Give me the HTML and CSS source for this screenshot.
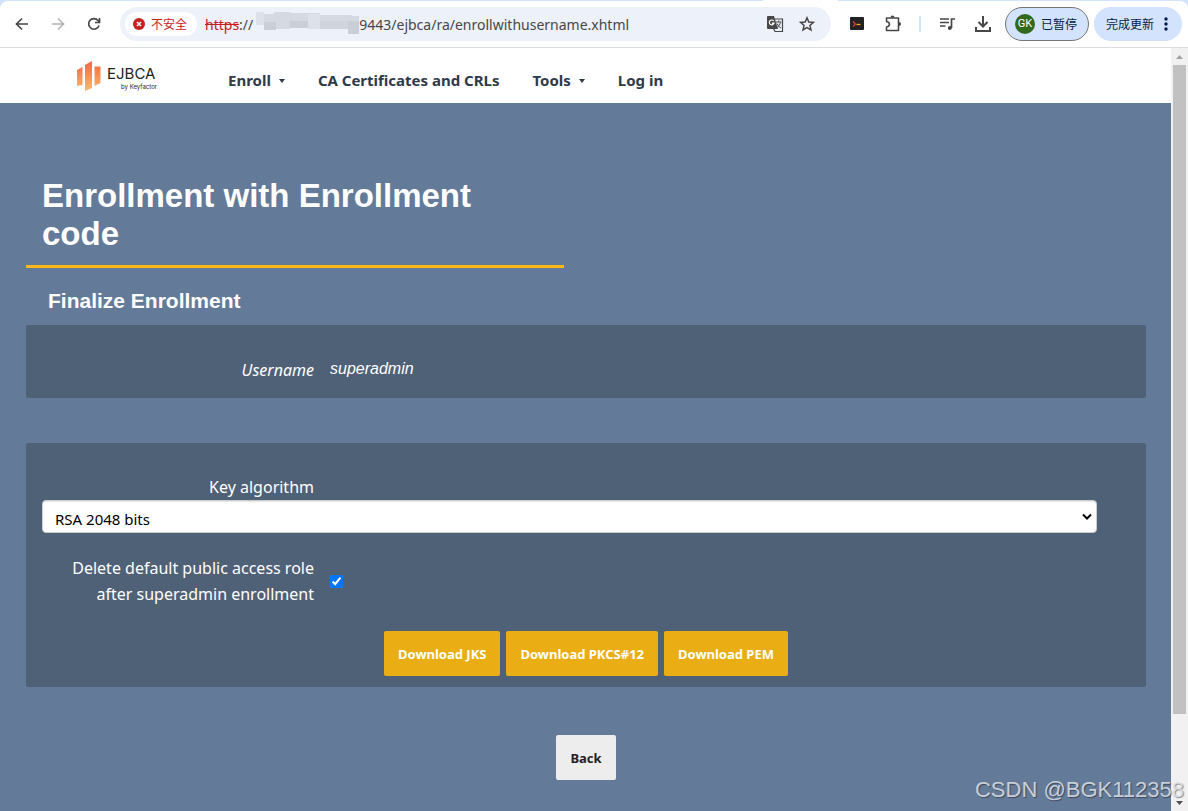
FILE: index.html
```html
<!DOCTYPE html>
<html lang="en">
<head>
  <meta charset="UTF-8">
  <meta name="viewport" content="width=device-width, initial-scale=1.0">
  <title>Enrollment with Enrollment code</title>
  <link rel="stylesheet" href="styles.css">
</head>
<body>
  <div class="tab-strip"><div class="active-tab"></div></div>
  <div class="toolbar">
    <div class="nav-buttons">
      <button class="icon-btn" aria-label="Back">
        <svg width="14" height="14" viewBox="0 0 14 14" fill="none" stroke="#474747" stroke-width="1.700"><path d="M13 7H2M7 1.500L1.500 7L7 12.500"/></svg>
      </button>
      <button class="icon-btn" aria-label="Forward">
        <svg width="14" height="14" viewBox="0 0 14 14" fill="none" stroke="#b4b4b4" stroke-width="1.700"><path d="M1 7H12M7 1.500L12.500 7L7 12.500"/></svg>
      </button>
      <button class="icon-btn" aria-label="Reload">
        <svg width="14" height="14" viewBox="0 0 14 14" fill="none" stroke="#474747" stroke-width="1.700"><path d="M12 8.500A5.300 5.300 0 1 1 11 3.500L12.300 5"/><path d="M12.500 1V5.500H8"/></svg>
      </button>
    </div>
    <div class="omnibox">
      <button class="security-chip">
        <svg width="12" height="12" viewBox="0 0 12 12"><circle cx="6" cy="6" r="6" fill="#c5221f"/><path d="M4 4L8 8M8 4L4 8" stroke="#fff" stroke-width="1.600"/></svg>
        不安全
      </button>
      <div class="url"><span class="scheme">https</span><span>://</span><svg class="mosaic" width="103" height="24" viewBox="0 0 103 24"><path d="M0 0H8V2H18V0H34V1H64V3H96V4H103V22H92V17H52V16H34V17H20V18H8V13H0Z" fill="#d5d9e1"/><path d="M8 10H20V18H8ZM34 9H52V16H34ZM92 9H103V22H92Z" fill="#c9ced7"/><path d="M0 0H8V13H0ZM52 2H64V17H52Z" fill="#dde1e9"/><path d="M64 9H92V17H64Z" fill="#d0d4dd"/></svg><span>9443/ejbca/ra/enrollwithusername.xhtml</span></div>
      <button class="omni-btn" aria-label="Translate">
        <svg width="18" height="18" viewBox="0 0 18 18"><path d="M2 1H8L12 14H2Q1 14 1 13V2Q1 1 2 1Z" fill="#474747"/><path d="M9 4H16.500V16.500H9L7.500 13.500" fill="none" stroke="#474747" stroke-width="1.200"/><path d="M7.700 6A2.400 2.400 0 1 0 8 8.200H5.800" fill="none" stroke="#fff" stroke-width="1.200"/><path d="M10 7H15.500M12.700 5.500V7M14.500 7.500Q13.500 11 11 12.500M11 8.500Q12.500 12 15 13" fill="none" stroke="#474747"/></svg>
      </button>
      <button class="omni-btn" aria-label="Bookmark">
        <svg width="16" height="16" viewBox="0 0 16 16" fill="none" stroke="#474747" stroke-width="1.500"><path d="M8 1.800L9.800 6L14.400 6.400L10.900 9.400L12 13.900L8 11.500L4 13.900L5.100 9.400L1.600 6.400L6.200 6Z"/></svg>
      </button>
    </div>
    <div class="extensions">
      <button class="icon-btn" aria-label="Terminal extension">
        <svg width="16" height="14" viewBox="0 0 16 14"><rect x="1" width="14" height="13" rx="1" fill="#222"/><path d="M4 4.500L6.500 7L4 9.500" fill="none" stroke="#e53935" stroke-width="1.300"/><path d="M7.500 7.500H11.500" stroke="#f9a825" stroke-width="1.300"/></svg>
      </button>
      <button class="icon-btn" aria-label="Extensions">
        <svg width="18" height="18" viewBox="0 0 18 18"><path d="M2.500 3H14.500V15.500H2.500V12Q5.500 11.500 5.500 9.300Q5.500 7 2.500 6.500Z" fill="none" stroke="#474747" stroke-width="1.600" stroke-linejoin="round"/><path d="M6.500 2.500A2 2 0 0 1 10.500 2.500ZM15 7A2 2 0 0 1 15 11Z" fill="#474747"/></svg>
      </button>
      <span class="divider"></span>
      <button class="icon-btn" aria-label="Media">
        <svg width="16" height="14" viewBox="0 0 16 14" fill="none" stroke="#474747" stroke-width="1.700"><path d="M1 2H10M1 5.500H10M1 9H6.500"/><path d="M12.500 11V2H16"/><circle cx="10.800" cy="11" r="2" fill="#474747" stroke="none"/></svg>
      </button>
      <button class="icon-btn" aria-label="Downloads">
        <svg width="16" height="16" viewBox="0 0 16 16" fill="none" stroke="#474747" stroke-width="2"><path d="M8 0V10M3.500 6L8 10.500L12.500 6M1 11V15H15V11"/></svg>
      </button>
    </div>
    <div class="profile">
      <button class="profile-btn"><span class="avatar">GK</span>已暂停</button>
      <button class="update-btn">完成更新<svg width="4" height="16" viewBox="0 0 4 16" fill="#041e49"><circle cx="2" cy="3" r="1.700"/><circle cx="2" cy="8" r="1.700"/><circle cx="2" cy="13" r="1.700"/></svg></button>
    </div>
  </div>

  <div class="viewport">
    <div class="page">
      <header class="header">
        <a class="logo" href="#" aria-label="EJBCA by Keyfactor">
          <svg width="26" height="31" viewBox="0 0 26 31">
            <defs><linearGradient id="bars" x1="0" y1="0" x2="0" y2="31" gradientUnits="userSpaceOnUse"><stop offset="0" stop-color="#f4633f"/><stop offset="1" stop-color="#ffb968"/></linearGradient></defs>
            <path d="M1 10L6.500 7V25L1 26ZM9 5L16 1V28L9 31ZM18.500 6.500H24.500V23L18.500 26Z" fill="url(#bars)"/>
          </svg>
          <span class="logo-text"><span class="logo-name">EJBCA</span><span class="logo-sub">by Keyfactor</span></span>
        </a>
        <nav class="menu">
          <a class="dropdown" href="#">Enroll</a>
          <a href="#">CA Certificates and CRLs</a>
          <a class="dropdown" href="#">Tools</a>
          <a href="#">Log in</a>
        </nav>
      </header>

      <main class="content">
        <h1>Enrollment with Enrollment code</h1>
        <h2>Finalize Enrollment</h2>

        <section class="panel user-panel">
          <div class="row">
            <span class="label">Username</span>
            <span class="value">superadmin</span>
          </div>
        </section>

        <form class="panel">
          <label class="label" for="keyAlgorithm">Key algorithm</label>
          <div class="select-wrap">
            <select id="keyAlgorithm">
              <option>RSA 2048 bits</option>
            </select>
            <svg class="chevron" width="10" height="8" viewBox="0 0 10 8" fill="none" stroke="#000" stroke-width="2"><path d="M1 1.500L5 5.500L9 1.500"/></svg>
          </div>
          <div class="row">
            <label class="label" for="deleteRole">Delete default public access role after superadmin enrollment</label>
            <input type="checkbox" id="deleteRole" checked>
          </div>
          <div class="buttons">
            <button type="button" class="btn">Download JKS</button>
            <button type="button" class="btn">Download PKCS#12</button>
            <button type="button" class="btn">Download PEM</button>
          </div>
        </form>

        <div class="back">
          <button type="button" class="btn btn-back">Back</button>
        </div>
      </main>
    </div>

    <div class="scrollbar">
      <svg width="17" height="17" viewBox="0 0 17 17"><path d="M5 11L8.500 7L12 11Z" fill="#a3a3a3"/></svg>
      <div class="track"><div class="thumb"></div></div>
      <svg width="17" height="17" viewBox="0 0 17 17"><path d="M5 7L8.500 11L12 7Z" fill="#505050"/></svg>
    </div>
  </div>
  <div class="watermark">CSDN @BGK112358</div>
</body>
</html>
```

FILE: styles.css
```css
* {
  box-sizing: border-box;
}

body {
  margin: 0;
  height: 100vh;
  display: flex;
  flex-direction: column;
  position: relative;
  overflow: hidden;
  font-family: "Noto Sans", "Noto Sans CJK SC", sans-serif;
  background: #d3e3fd;
}

button {
  border: none;
  background: none;
  padding: 0;
  font-family: inherit;
  cursor: pointer;
}

/* Browser bar */
.tab-strip {
  height: 1px;
  flex: none;
  display: flex;
  justify-content: flex-end;
  padding-right: 350px;
}

.active-tab {
  width: 75px;
  background: #fff;
}

.toolbar {
  height: 47px;
  flex: none;
  display: flex;
  align-items: center;
  padding: 0 6px 0 4px;
  background: #fff;
  border-bottom: 1px solid #dadce0;
  border-radius: 8px 8px 0 0;
}

.nav-buttons,
.extensions,
.profile {
  display: flex;
  align-items: center;
}

.icon-btn {
  width: 36px;
  height: 34px;
  display: flex;
  align-items: center;
  justify-content: center;
}

.omnibox {
  flex: 1;
  height: 34px;
  display: flex;
  align-items: center;
  margin: 0 8px;
  padding: 0 8px 0 5px;
  border-radius: 17px;
  background: #ecf1fa;
}

.security-chip {
  height: 24px;
  display: flex;
  align-items: center;
  gap: 6px;
  padding: 0 10px 0 8px;
  border-radius: 12px;
  background: #fff;
  color: #c5221f;
  font-size: 12px;
}

.url {
  flex: 1;
  display: flex;
  align-items: center;
  margin-left: 8px;
  font-size: 14px;
  color: #474747;
}

.scheme {
  color: #c5221f;
  text-decoration: line-through;
}

.mosaic {
  margin-left: 3px;
}

.omni-btn {
  width: 32px;
  display: flex;
  justify-content: center;
}

.divider {
  width: 2px;
  height: 16px;
  margin: 0 8px;
  background: #d3e3fd;
}

.profile {
  gap: 5px;
  margin-left: 4px;
}

.profile-btn,
.update-btn {
  height: 34px;
  display: flex;
  align-items: center;
  border-radius: 17px;
  background: #d3e3fd;
  color: #041e49;
  font-size: 12px;
}

.profile-btn {
  width: 84px;
  gap: 6px;
  padding: 0 9px;
  border: 1px solid #747775;
}

.avatar {
  width: 20px;
  height: 20px;
  border-radius: 50%;
  background: #33691e;
  color: #fff;
  font-family: Roboto, sans-serif;
  font-size: 11px;
  line-height: 20px;
  text-align: center;
}

.update-btn {
  width: 88px;
  gap: 10px;
  padding: 0 12px;
}

/* Page */
.viewport {
  flex: 1;
  min-height: 0;
  display: flex;
}

.page {
  flex: 1;
  overflow: hidden;
  background: #647a99;
}

.header {
  height: 55px;
  display: flex;
  align-items: center;
  padding-left: 76px;
  background: #fff;
}

.logo {
  display: flex;
  align-items: center;
  gap: 5px;
  width: 152px;
  color: #222;
  text-decoration: none;
}

.logo-text {
  display: flex;
  flex-direction: column;
  width: 50px;
  padding-top: 4px;
  font-family: Inter, sans-serif;
}

.logo-name {
  font-size: 15px;
  line-height: 18px;
}

.logo-sub {
  font-size: 6px;
  line-height: 8px;
  text-align: right;
}

.menu {
  display: flex;
  gap: 33px;
  padding-top: 8px;
}

.menu a {
  color: #2e3a4b;
  font-size: 15px;
  line-height: 20px;
  font-weight: 700;
  text-decoration: none;
}

.menu .dropdown::after {
  content: "";
  display: inline-block;
  margin-left: 8px;
  vertical-align: middle;
  border-top: 4px solid #2e3a4b;
  border-left: 3px solid transparent;
  border-right: 3px solid transparent;
}

.content {
  padding: 73px 25px 0 26px;
  color: #fff;
}

h1,
h2 {
  margin: 0;
  font-family: "Liberation Sans", Arial, sans-serif;
}

h1 {
  width: 48%;
  padding: 1px 16px 12px;
  border-bottom: 3px solid #fcb813;
  font-size: 33px;
  line-height: 38px;
}

h2 {
  padding: 20px 22px 11px;
  font-size: 21px;
  line-height: 26px;
}

.panel {
  padding: 31px 16px 11px;
  margin-bottom: 45px;
  border-radius: 2px;
  background: #4f6177;
}

.row {
  display: flex;
  align-items: center;
  gap: 16px;
}

.label {
  display: block;
  width: 272px;
  font-size: 16px;
  line-height: 26px;
  text-align: right;
}

.user-panel {
  padding: 32px 16px 15px;
  font-style: italic;
}

.user-panel .row {
  align-items: flex-start;
}

.value {
  font-family: "Liberation Sans", Arial, sans-serif;
  font-size: 16px;
  line-height: 24px;
}

.select-wrap {
  position: relative;
  margin: 0 33px 22px 0;
}

select {
  appearance: none;
  display: block;
  width: 100%;
  height: 33px;
  padding: 5px 12px 0;
  border: 1px solid #ccc;
  border-radius: 4px;
  background: #fff;
  box-shadow: inset 0 1px 1px rgba(0, 0, 0, 0.1);
  color: #000;
  font-family: inherit;
  font-size: 15px;
}

.chevron {
  position: absolute;
  top: 13px;
  right: 5px;
  pointer-events: none;
}

input[type="checkbox"] {
  width: 13px;
  height: 13px;
  margin: 0;
  accent-color: #0075ff;
}

.buttons {
  display: flex;
  justify-content: center;
  gap: 6px;
  margin-top: 24px;
}

.btn {
  height: 45px;
  padding: 0 14px;
  border-radius: 2px;
  background: #eaae14;
  color: #fff;
  font-size: 13px;
  font-weight: 700;
}

.back {
  display: flex;
  justify-content: center;
  margin-top: 48px;
}

.btn-back {
  background: #ededed;
  color: #222;
}

/* Scrollbar */
.scrollbar {
  width: 17px;
  display: flex;
  flex-direction: column;
  background: #f1f1f1;
}

.track {
  flex: 1;
  padding: 0 2px;
}

.thumb {
  height: 89%;
  background: #c1c1c1;
}

.watermark {
  position: absolute;
  right: 4px;
  bottom: 8px;
  color: rgba(225, 228, 233, 0.85);
  font-family: "Liberation Sans", Arial, sans-serif;
  font-size: 22px;
  line-height: 26px;
  text-shadow: 1px 1px 1px rgba(0, 0, 0, 0.4);
}
```
